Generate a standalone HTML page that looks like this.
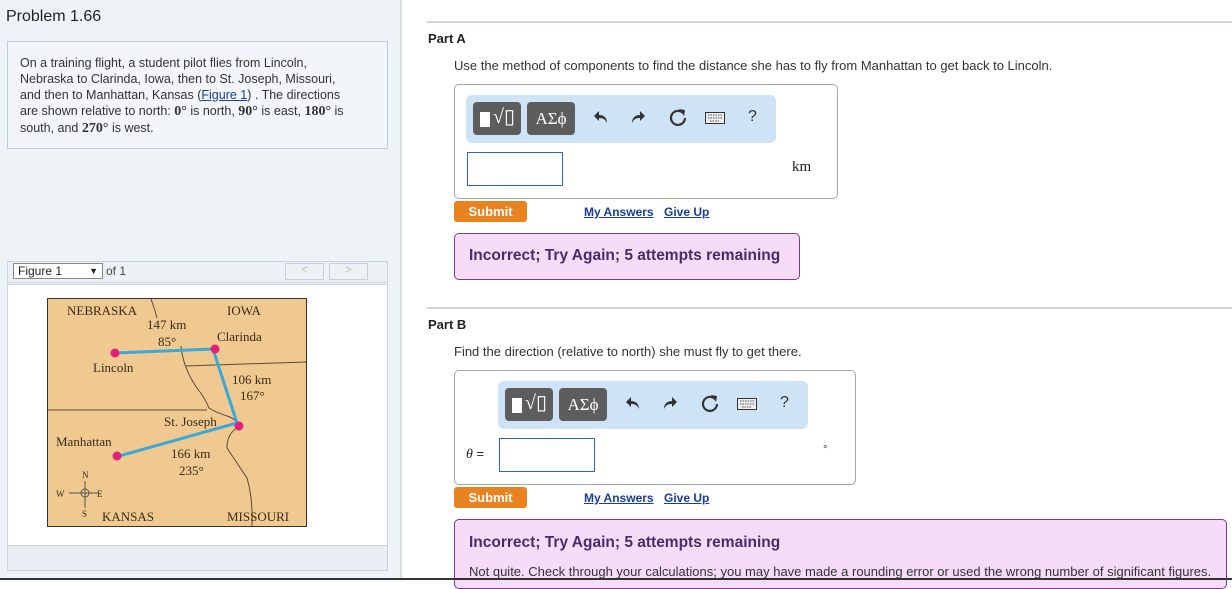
<!DOCTYPE html>
<html><head><meta charset="utf-8"><style>
*{margin:0;padding:0;box-sizing:border-box}
body{width:1232px;height:580px;position:relative;overflow:hidden;background:#fff;font-family:"Liberation Sans",sans-serif;color:#333}
.a{position:absolute}
.tb{position:absolute;background:#cfe3f6;border-radius:6px}
.btn{position:absolute;top:7px;width:48px;height:33px;background:#5d5d5d;border-radius:4px;color:#fff}
.ic{position:absolute;top:14px}
.sub{position:absolute;width:73px;height:21px;background:#e8831f;border-radius:3px;color:#fff;font-weight:bold;font-size:13px;text-align:center;line-height:21px}
.lnk{position:absolute;color:#1a3c9a;text-decoration:underline;font-size:12px;font-weight:bold}
.inc{position:absolute;background:#f6dcf8;border:1px solid #7a3a8a;border-radius:5px;color:#4a2a6a;font-weight:bold;font-size:15.5px}
.m{font-family:'Liberation Serif',serif;font-size:14px;font-weight:bold}
</style></head><body>
<div class="a" style="left:0;top:0;width:400px;height:580px;background:#eef3f8"></div>
<div class="a" style="left:400px;top:0;width:2px;height:580px;background:#d6dde6"></div>
<div class="a" style="left:6px;top:8px;font-size:16px;color:#222">Problem 1.66</div>
<div class="a" style="left:7px;top:41px;width:381px;height:108px;border:1px solid #b8cde0;background:#f2f6fa"></div>
<div class="a" style="left:20px;top:55px;white-space:nowrap;font-size:12.5px;line-height:16px;color:#333">On a training flight, a student pilot flies from Lincoln,<br>Nebraska to Clarinda, Iowa, then to St. Joseph, Missouri,<br>and then to Manhattan, Kansas (<span style="color:#1a3c9a;text-decoration:underline">Figure 1</span>) . The directions<br>are shown relative to north: <span class="m">0°</span> is north, <span class="m">90°</span> is east, <span class="m">180°</span> is<br>south, and <span class="m">270°</span> is west.</div>

<div class="a" style="left:7px;top:261px;width:381px;height:22px;border:1px solid #c8d4e0;background:#edf1f5"></div>
<div class="a" style="left:13px;top:263px;width:90px;height:16px;border:1px solid #888;background:#fff;font-size:12px;line-height:14px;padding-left:4px;color:#222">Figure 1<span style="position:absolute;right:4px;font-size:9px">▼</span></div>
<div class="a" style="left:106px;top:264px;font-size:12px;color:#444">of 1</div>
<div class="a" style="left:285px;top:263px;width:39px;height:17px;border:1px solid #ccd;background:#eef1f4;color:#bbb;font-size:11px;text-align:center">&lt;</div>
<div class="a" style="left:329px;top:263px;width:39px;height:17px;border:1px solid #ccd;background:#eef1f4;color:#bbb;font-size:11px;text-align:center">&gt;</div>
<div class="a" style="left:7px;top:284px;width:381px;height:262px;border:1px solid #c8d4e0;background:#fff"></div>
<div class="a" style="left:7px;top:545px;width:381px;height:26px;border:1px solid #c8d4e0;background:#e8eef4"></div>

<svg class="a" style="left:47px;top:298px" width="260" height="229" viewBox="0 0 260 229">
<rect x="0.5" y="0.5" width="259" height="228" fill="#efc98f" stroke="#333"/>
<g fill="none" stroke="#5a4a3a" stroke-width="1">
<path d="M104 1 Q108 12 110 20 M134 48 Q136 70 150 90 Q158 100 162 110 Q168 114 180 118 Q192 122 190 130 Q180 136 180 150 Q190 165 200 180 Q206 200 205 228"/>
<path d="M138 68 L259 64"/>
<path d="M1 112 L160 112"/>
</g>
<g font-family="Liberation Serif,serif" font-size="13" fill="#3a2a1a">
<text x="20" y="17">NEBRASKA</text><text x="180" y="17">IOWA</text>
<text x="100" y="31">147 km</text><text x="111" y="48">85°</text>
<text x="170" y="43">Clarinda</text><text x="46" y="74">Lincoln</text>
<text x="185" y="86">106 km</text><text x="193" y="102">167°</text>
<text x="117" y="128">St. Joseph</text><text x="9" y="148">Manhattan</text>
<text x="124" y="160">166 km</text><text x="132" y="177">235°</text>
<text x="55" y="223">KANSAS</text><text x="180" y="223">MISSOURI</text>
<text x="35" y="180" font-size="9">N</text><text x="9" y="199" font-size="9">W</text><text x="50" y="199" font-size="9">E</text><text x="35" y="219" font-size="9">S</text>
</g>
<g stroke="#555" fill="none"><circle cx="38" cy="195" r="4"/><path d="M38 183V210M22 195H52"/></g>
<g stroke="#3aa8d8" stroke-width="3" fill="none"><path d="M68 55L166 51L190 125L72 158"/></g>
<g fill="#e0207a"><circle cx="68" cy="55" r="4.5"/><circle cx="168" cy="51" r="4.5"/><circle cx="192" cy="128" r="4.5"/><circle cx="70" cy="158" r="4.5"/></g>
</svg>

<div class="a" style="left:427px;top:21px;width:805px;height:2px;background:#d8cfe0"></div>
<div class="a" style="left:428px;top:31px;font-size:13px;font-weight:bold;color:#222">Part A</div>
<div class="a" style="left:454px;top:58px;font-size:13px;color:#333">Use the method of components to find the distance she has to fly from Manhattan to get back to Lincoln.</div>
<div class="a" style="left:454px;top:84px;width:384px;height:115px;border:1px solid #a0aaa0;border-radius:5px"></div>
<div class="tb" style="left:466px;top:95px;width:310px;height:48px">
 <div class="btn" style="left:7px"><div class="a" style="left:7px;top:10px;width:10px;height:15px;background:#fff"></div><div class="a" style="left:20px;top:2px;font-size:20px;font-family:'Liberation Serif',serif">√▯</div></div>
 <div class="btn" style="left:61px;font-family:'Liberation Serif',serif;font-size:17px;text-align:center;line-height:33px">ΑΣϕ</div>
 <svg class="ic" style="left:127px" width="16" height="16" viewBox="0 0 16 16"><path d="M6 2L1 7l5 5V9c4 0 6 1 8 5 0-5-3-8-8-8z" fill="#333"/></svg>
 <svg class="ic" style="left:164px" width="16" height="16" viewBox="0 0 16 16"><path d="M10 2l5 5-5 5V9c-4 0-6 1-8 5 0-5 3-8 8-8z" fill="#333"/></svg>
 <svg class="ic" style="left:203px;top:13px" width="18" height="18" viewBox="0 0 18 18"><path d="M14 5A7 7 0 1 0 16 10" fill="none" stroke="#333" stroke-width="2.2"/><path d="M10 1l6 1-1 6z" fill="#333"/></svg>
 <svg class="ic" style="left:239px;top:17px" width="20" height="12" viewBox="0 0 20 12"><rect x="0.5" y="0.5" width="19" height="11" fill="#eee" stroke="#333"/><path d="M3 3h14M3 6h14M5 9h10" stroke="#555" stroke-dasharray="1.5 1"/></svg>
 <div class="a" style="left:282px;top:13px;font-size:16px;color:#333">?</div>
</div>
<div class="a" style="left:467px;top:152px;width:96px;height:34px;border:1px solid #3060d0"></div>
<div class="a" style="left:792px;top:159px;font-family:'Liberation Serif',serif;font-size:15px;color:#222">km</div>
<div class="sub" style="left:454px;top:201px">Submit</div>
<div class="lnk" style="left:584px;top:205px">My Answers</div>
<div class="lnk" style="left:664px;top:205px">Give Up</div>
<div class="inc" style="left:454px;top:233px;width:346px;height:47px;padding:13px 0 0 14px">Incorrect; Try Again; 5 attempts remaining</div>

<div class="a" style="left:427px;top:307px;width:805px;height:2px;background:#d0d0d0"></div>
<div class="a" style="left:428px;top:317px;font-size:13px;font-weight:bold;color:#222">Part B</div>
<div class="a" style="left:454px;top:344px;font-size:13px;color:#333">Find the direction (relative to north) she must fly to get there.</div>
<div class="a" style="left:454px;top:370px;width:402px;height:115px;border:1px solid #a0aaa0;border-radius:5px"></div>
<div class="tb" style="left:498px;top:381px;width:310px;height:48px">
 <div class="btn" style="left:7px"><div class="a" style="left:7px;top:10px;width:10px;height:15px;background:#fff"></div><div class="a" style="left:20px;top:2px;font-size:20px;font-family:'Liberation Serif',serif">√▯</div></div>
 <div class="btn" style="left:61px;font-family:'Liberation Serif',serif;font-size:17px;text-align:center;line-height:33px">ΑΣϕ</div>
 <svg class="ic" style="left:127px" width="16" height="16" viewBox="0 0 16 16"><path d="M6 2L1 7l5 5V9c4 0 6 1 8 5 0-5-3-8-8-8z" fill="#333"/></svg>
 <svg class="ic" style="left:164px" width="16" height="16" viewBox="0 0 16 16"><path d="M10 2l5 5-5 5V9c-4 0-6 1-8 5 0-5 3-8 8-8z" fill="#333"/></svg>
 <svg class="ic" style="left:203px;top:13px" width="18" height="18" viewBox="0 0 18 18"><path d="M14 5A7 7 0 1 0 16 10" fill="none" stroke="#333" stroke-width="2.2"/><path d="M10 1l6 1-1 6z" fill="#333"/></svg>
 <svg class="ic" style="left:239px;top:17px" width="20" height="12" viewBox="0 0 20 12"><rect x="0.5" y="0.5" width="19" height="11" fill="#eee" stroke="#333"/><path d="M3 3h14M3 6h14M5 9h10" stroke="#555" stroke-dasharray="1.5 1"/></svg>
 <div class="a" style="left:282px;top:13px;font-size:16px;color:#333">?</div>
</div>
<div class="a" style="left:466px;top:446px;font-size:13px;color:#222"><i style="font-family:'Liberation Serif',serif;font-size:14px">θ</i> =</div>
<div class="a" style="left:499px;top:438px;width:96px;height:34px;border:1px solid #3060d0"></div>
<div class="a" style="left:823px;top:444px;font-size:11px;color:#333">°</div>
<div class="sub" style="left:454px;top:487px">Submit</div>
<div class="lnk" style="left:584px;top:491px">My Answers</div>
<div class="lnk" style="left:664px;top:491px">Give Up</div>
<div class="inc" style="left:454px;top:519px;width:773px;height:70px;padding:14px 0 0 14px">Incorrect; Try Again; 5 attempts remaining<div style="font-weight:normal;font-size:13px;color:#333;margin-top:12px">Not quite. Check through your calculations; you may have made a rounding error or used the wrong number of significant figures.</div></div>
<div class="a" style="left:0;top:578px;width:1232px;height:2px;background:#333"></div>
</body></html>
